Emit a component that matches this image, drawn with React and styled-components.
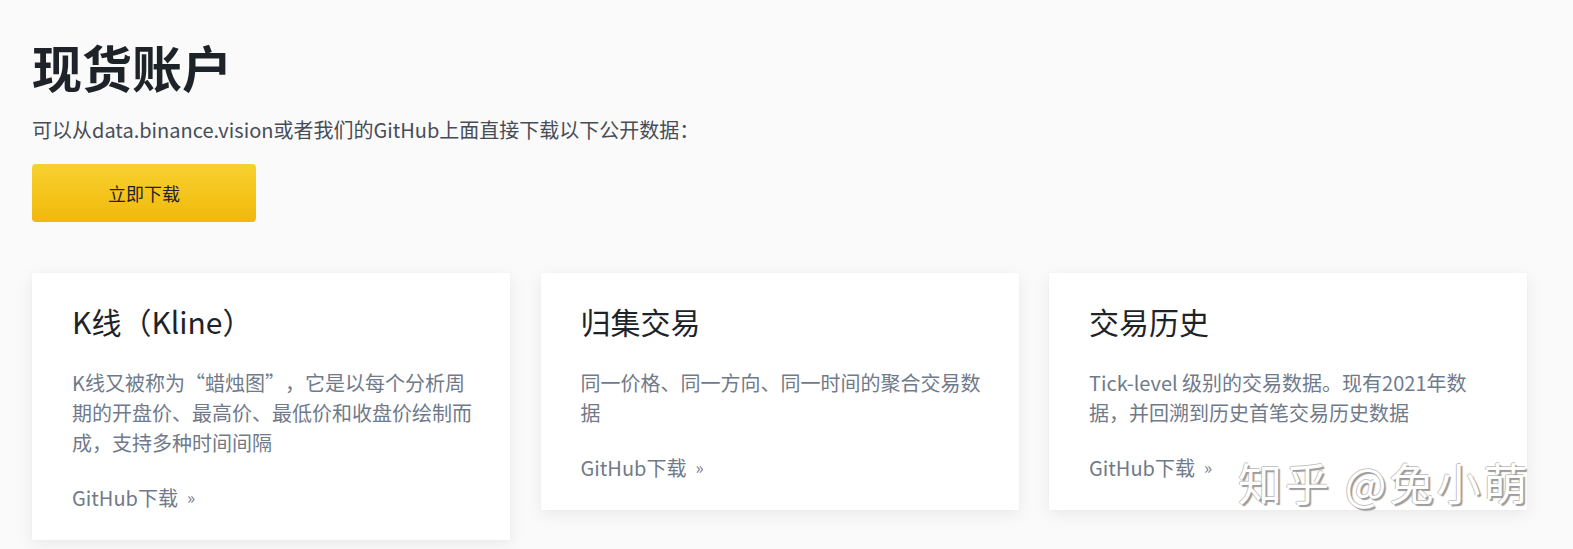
import React from "react";
import styled, { createGlobalStyle } from "styled-components";

const GlobalStyle = createGlobalStyle`
  html, body {
    margin: 0;
    padding: 0;
    background: #fafafa;
  }
  body {
    font-family: "Noto Sans CJK SC", "Noto Sans", sans-serif;
    color: #1e2329;
    text-spacing-trim: space-all;
  }
`;

const cards = [
  {
    title: "K线（Kline）",
    text: "K线又被称为“蜡烛图”，它是以每个分析周期的开盘价、最高价、最低价和收盘价绘制而成，支持多种时间间隔",
  },
  {
    title: "归集交易",
    text: "同一价格、同一方向、同一时间的聚合交易数据",
  },
  {
    title: "交易历史",
    text: "Tick-level 级别的交易数据。现有2021年数据，并回溯到历史首笔交易历史数据",
  },
];

const Page = styled.main`
  position: relative;
  min-height: 549px;
  box-sizing: border-box;
  padding: 36px 32px 0 32px;
`;

const Title = styled.h1`
  margin: 0;
  font-size: 50px;
  line-height: 60px;
  font-weight: 700;
  color: #1e2329;
`;

const Lead = styled.p`
  margin: 19px 0 0 0;
  font-size: 20px;
  line-height: 30px;
  color: #474d57;
`;

const DownloadButton = styled.button`
  display: block;
  margin-top: 19px;
  width: 224px;
  height: 58px;
  border: none;
  border-radius: 4px;
  background: linear-gradient(180deg, #f8d12f 0%, #f0b90b 100%);
  font-family: inherit;
  font-size: 18px;
  color: #1e2329;
  cursor: pointer;
`;

const CardGrid = styled.section`
  display: grid;
  grid-template-columns: repeat(3, 478px);
  column-gap: 30.5px;
  align-items: start;
  margin-top: 51px;
`;

const Card = styled.article`
  background: #fff;
  padding: 28px 38px 27px 40px;
  box-shadow: 0 0 1px rgba(0, 0, 0, 0.06), 0 4px 16px rgba(0, 0, 0, 0.07);
`;

const CardTitle = styled.h3`
  margin: 0;
  font-size: 30px;
  line-height: 40px;
  font-weight: 400;
  color: #1e2329;
`;

const CardText = styled.p`
  margin: 27px 0 0 0;
  font-size: 20px;
  line-height: 30px;
  color: #707a8a;
`;

const CardLink = styled.a`
  display: inline-block;
  margin-top: 24px;
  font-size: 20px;
  line-height: 30px;
  color: #707a8a;
  text-decoration: none;
`;

const Chevron = styled.span`
  margin-left: 9px;
  font-size: 17px;
  vertical-align: 2px;
`;

const Watermark = styled.div`
  position: absolute;
  left: 1238px;
  top: 452px;
  font-size: 44px;
  line-height: 60px;
  letter-spacing: 3px;
  color: #ffffff;
  text-shadow: 2px 2px 1px #9c9c9c, -1px 0 0 #c4c4c4, 0 -1px 0 #c4c4c4;
  pointer-events: none;
`;

export default function App() {
  return (
    <>
      <GlobalStyle />
      <Page>
        <Title>现货账户</Title>
        <Lead>可以从data.binance.vision或者我们的GitHub上面直接下载以下公开数据：</Lead>
        <DownloadButton>立即下载</DownloadButton>
        <CardGrid>
          {cards.map((c) => (
            <Card key={c.title}>
              <CardTitle>{c.title}</CardTitle>
              <CardText>{c.text}</CardText>
              <CardLink href="#">
                GitHub下载<Chevron>»</Chevron>
              </CardLink>
            </Card>
          ))}
        </CardGrid>
        <Watermark>知乎 @兔小萌</Watermark>
      </Page>
    </>
  );
}
